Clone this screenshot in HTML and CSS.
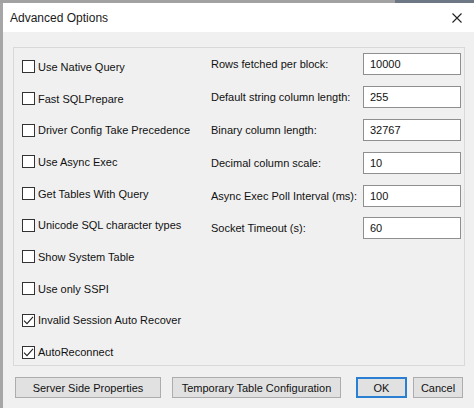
FILE: index.html
```html
<!DOCTYPE html>
<html lang="en">
<head>
  <meta charset="UTF-8" />
  <title>Advanced Options</title>
  <link rel="stylesheet" href="styles.css">
</head>
<body>

<div class="topband"></div>
<div class="window">
  <div class="titlebar">
    <span class="title">Advanced Options</span>
    <svg class="close" width="10" height="10" viewBox="0 0 10 10">
      <path d="M0.5 0.5 L9.5 9.5 M9.5 0.5 L0.5 9.5" stroke="#222" stroke-width="1.1" fill="none"/>
    </svg>
  </div>

  <div class="content">
    <div class="panel">
      <div class="checks">
        <label class="check"><span class="box"></span>Use Native Query</label>
        <label class="check"><span class="box"></span>Fast SQLPrepare</label>
        <label class="check"><span class="box"></span>Driver Config Take Precedence</label>
        <label class="check"><span class="box"></span>Use Async Exec</label>
        <label class="check"><span class="box"></span>Get Tables With Query</label>
        <label class="check"><span class="box"></span>Unicode SQL character types</label>
        <label class="check"><span class="box"></span>Show System Table</label>
        <label class="check"><span class="box"></span>Use only SSPI</label>
        <label class="check"><span class="box"><svg width="11" height="11" viewBox="0 0 11 11"><path d="M1 5.6 L4 8.6 L10 1.8" stroke="#222" stroke-width="1.1" fill="none"/></svg></span>Invalid Session Auto Recover</label>
        <label class="check"><span class="box"><svg width="11" height="11" viewBox="0 0 11 11"><path d="M1 5.6 L4 8.6 L10 1.8" stroke="#222" stroke-width="1.1" fill="none"/></svg></span>AutoReconnect</label>
      </div>

      <div class="fields">
        <div class="field"><span>Rows fetched per block:</span><input type="text" value="10000"></div>
        <div class="field"><span>Default string column length:</span><input type="text" value="255"></div>
        <div class="field"><span>Binary column length:</span><input type="text" value="32767"></div>
        <div class="field"><span>Decimal column scale:</span><input type="text" value="10"></div>
        <div class="field"><span>Async Exec Poll Interval (ms):</span><input type="text" value="100"></div>
        <div class="field"><span>Socket Timeout (s):</span><input type="text" value="60"></div>
      </div>
    </div>

    <div class="buttons">
      <button class="btn btn-server">Server Side Properties</button>
      <button class="btn btn-temp">Temporary Table Configuration</button>
      <button class="btn btn-ok">OK</button>
      <button class="btn btn-cancel">Cancel</button>
    </div>
  </div>
</div>

</body>
</html>
```

FILE: styles.css
```css
* { box-sizing: border-box; }

body {
  margin: 0;
  width: 474px;
  height: 408px;
  overflow: hidden;
  background: #f0f0f0;
  font-family: "Liberation Sans", Arial, sans-serif;
  font-size: 11px;
  color: #111;
}

.topband {
  height: 3px;
  background: linear-gradient(to right, #a2a2a2 0, #a2a2a2 395px, #6d7884 395px, #6d7884 100%);
}

.window {
  height: 405px;
  border-left: 3px solid #a6a6a6;
}

.titlebar {
  display: flex;
  align-items: center;
  justify-content: space-between;
  height: 29px;
  padding-left: 7px;
  padding-right: 12px;
  background: #fff;
}

.title {
  font-size: 12px;
  color: #1a1a1a;
}

.content {
  padding: 15px 0 0 10px;
}

.panel {
  display: grid;
  grid-template-columns: 197px 1fr;
  width: 452px;
  height: 319px;
  border: 1px solid #d9d9d9;
}

.checks {
  padding-top: 3px;
}

.check {
  display: flex;
  align-items: center;
  height: 31.7px;
  padding-left: 8px;
}

.box {
  display: flex;
  align-items: center;
  justify-content: center;
  width: 13px;
  height: 13px;
  margin-right: 3px;
  background: #fff;
  border: 1px solid #333;
}

.fields {
  padding-right: 3px;
}

.field {
  display: flex;
  align-items: center;
  height: 32.8px;
}

.field input {
  margin-left: auto;
  width: 98px;
  height: 22px;
  padding: 0 6px;
  font-family: inherit;
  font-size: 11px;
  color: #111;
  background: #fff;
  border: 1px solid #8f8f8f;
  outline: none;
}

.buttons {
  display: flex;
  margin-top: 11px;
  padding-left: 2px;
}

.btn {
  height: 21px;
  padding: 0;
  font-family: inherit;
  font-size: 11px;
  color: #111;
  background: #e1e1e1;
  border: 1px solid #adadad;
}

.btn-server { width: 146px; }
.btn-temp { width: 169px; margin-left: 11px; }
.btn-ok { width: 51px; margin-left: 15px; border: 2px solid #2b7fd3; }
.btn-cancel { width: 50px; margin-left: 6px; }
```
